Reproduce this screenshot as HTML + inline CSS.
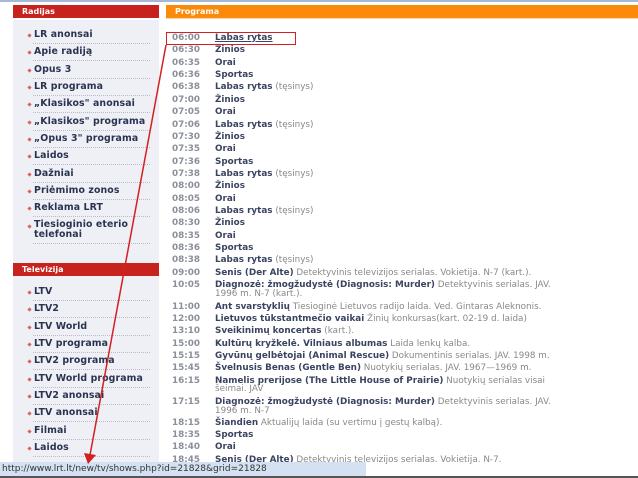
<!DOCTYPE html>
<html><head><meta charset="utf-8"><style>
body{margin:0;width:638px;height:478px;overflow:hidden;background:#fff;font-family:"DejaVu Sans","Liberation Sans",sans-serif;position:relative}
.a{position:absolute;white-space:nowrap}
#side{position:absolute;left:13px;top:20px;width:146px;height:442px;background:#eef0f6}
.hd{position:absolute;height:13px;color:#fff;font-weight:bold;font-size:8px;line-height:13px;padding-left:9px;box-sizing:border-box}
.li{position:absolute;left:33px;width:117px;height:16px;border-bottom:1px dotted #b8bcc8;font-weight:bold;font-size:9.4px;color:#2a3450;line-height:12px;letter-spacing:0.1px}
.li:before{content:"";position:absolute;left:-5px;top:7px;width:3px;height:3px;background:#e06060;transform:rotate(45deg)}
.li span{position:absolute;left:1px;top:2px}
.r{position:absolute;left:172px;font-size:8.8px;line-height:8.5px;color:#888;white-space:nowrap}
.r b{color:#3a4460;font-weight:bold}
.r i{font-style:normal;position:absolute;left:0;color:#8a8f99;font-weight:bold}
.r .t{position:absolute;left:43px}
</style></head><body>
<div class="a" style="left:0;top:0;width:638px;height:2px;background:#a5b8d6"></div>
<div id="side"></div>
<div class="hd" style="left:13px;top:5px;width:146px;background:#c8221e">Radijas</div>
<div class="hd" style="left:166px;top:5px;width:472px;background:#fb8a0a">Programa</div>
<div class="a" style="left:166px;top:18px;width:472px;height:1px;background:#ffd9a8"></div>
<div class="hd" style="left:13px;top:263px;width:146px;background:#c8221e">Televizija</div>

<div class="li" style="top:27px"><span>LR anonsai</span></div>
<div class="li" style="top:44px"><span>Apie radiją</span></div>
<div class="li" style="top:62px"><span>Opus 3</span></div>
<div class="li" style="top:79px"><span>LR programa</span></div>
<div class="li" style="top:96px"><span>„Klasikos" anonsai</span></div>
<div class="li" style="top:114px"><span>„Klasikos" programa</span></div>
<div class="li" style="top:131px"><span>„Opus 3" programa</span></div>
<div class="li" style="top:148px"><span>Laidos</span></div>
<div class="li" style="top:166px"><span>Dažniai</span></div>
<div class="li" style="top:183px"><span>Priėmimo zonos</span></div>
<div class="li" style="top:200px"><span>Reklama LRT</span></div>
<div class="li" style="top:218px;height:25px"><span style="line-height:9.5px">Tiesioginio eterio<br>telefonai</span></div>

<div class="li" style="top:284px"><span>LTV</span></div>
<div class="li" style="top:301px"><span>LTV2</span></div>
<div class="li" style="top:319px"><span>LTV World</span></div>
<div class="li" style="top:336px"><span>LTV programa</span></div>
<div class="li" style="top:353px"><span>LTV2 programa</span></div>
<div class="li" style="top:371px"><span>LTV World programa</span></div>
<div class="li" style="top:388px"><span>LTV2 anonsai</span></div>
<div class="li" style="top:405px"><span>LTV anonsai</span></div>
<div class="li" style="top:423px"><span>Filmai</span></div>
<div class="li" style="top:440px"><span>Laidos</span></div>

<div class="r" style="top:34px"><i>06:00</i><span class="t"><b style="text-decoration:underline">Labas rytas</b></span></div>
<div class="r" style="top:46.4px"><i>06:30</i><span class="t"><b>Žinios</b></span></div>
<div class="r" style="top:58.7px"><i>06:35</i><span class="t"><b>Orai</b></span></div>
<div class="r" style="top:71px"><i>06:36</i><span class="t"><b>Sportas</b></span></div>
<div class="r" style="top:83.4px"><i>06:38</i><span class="t"><b>Labas rytas</b> (tęsinys)</span></div>
<div class="r" style="top:95.8px"><i>07:00</i><span class="t"><b>Žinios</b></span></div>
<div class="r" style="top:108.1px"><i>07:05</i><span class="t"><b>Orai</b></span></div>
<div class="r" style="top:120.5px"><i>07:06</i><span class="t"><b>Labas rytas</b> (tęsinys)</span></div>
<div class="r" style="top:132.8px"><i>07:30</i><span class="t"><b>Žinios</b></span></div>
<div class="r" style="top:145.2px"><i>07:35</i><span class="t"><b>Orai</b></span></div>
<div class="r" style="top:157.5px"><i>07:36</i><span class="t"><b>Sportas</b></span></div>
<div class="r" style="top:169.9px"><i>07:38</i><span class="t"><b>Labas rytas</b> (tęsinys)</span></div>
<div class="r" style="top:182.2px"><i>08:00</i><span class="t"><b>Žinios</b></span></div>
<div class="r" style="top:194.6px"><i>08:05</i><span class="t"><b>Orai</b></span></div>
<div class="r" style="top:206.9px"><i>08:06</i><span class="t"><b>Labas rytas</b> (tęsinys)</span></div>
<div class="r" style="top:219.3px"><i>08:30</i><span class="t"><b>Žinios</b></span></div>
<div class="r" style="top:231.6px"><i>08:35</i><span class="t"><b>Orai</b></span></div>
<div class="r" style="top:244px"><i>08:36</i><span class="t"><b>Sportas</b></span></div>
<div class="r" style="top:256.3px"><i>08:38</i><span class="t"><b>Labas rytas</b> (tęsinys)</span></div>
<div class="r" style="top:268.7px"><i>09:00</i><span class="t"><b>Senis (Der Alte)</b> Detektyvinis televizijos serialas. Vokietija. N-7 (kart.).</span></div>
<div class="r" style="top:281px"><i>10:05</i><span class="t"><b>Diagnozė: žmogžudystė (Diagnosis: Murder)</b> Detektyvinis serialas. JAV.<br>1996 m. N-7 (kart.).</span></div>
<div class="r" style="top:302.7px"><i>11:00</i><span class="t"><b>Ant svarstyklių</b> Tiesioginė Lietuvos radijo laida. Ved. Gintaras Aleknonis.</span></div>
<div class="r" style="top:315px"><i>12:00</i><span class="t"><b>Lietuvos tūkstantmečio vaikai</b> Žinių konkursas(kart. 02-19 d. laida)</span></div>
<div class="r" style="top:327.3px"><i>13:10</i><span class="t"><b>Sveikinimų koncertas</b> (kart.).</span></div>
<div class="r" style="top:339.7px"><i>15:00</i><span class="t"><b>Kultūrų kryžkelė. Vilniaus albumas</b> Laida lenkų kalba.</span></div>
<div class="r" style="top:352px"><i>15:15</i><span class="t"><b>Gyvūnų gelbėtojai (Animal Rescue)</b> Dokumentinis serialas. JAV. 1998 m.</span></div>
<div class="r" style="top:364.3px"><i>15:45</i><span class="t"><b>Švelnusis Benas (Gentle Ben)</b> Nuotykių serialas. JAV. 1967—1969 m.</span></div>
<div class="r" style="top:376.5px"><i>16:15</i><span class="t"><b>Namelis prerijose (The Little House of Prairie)</b> Nuotykių serialas visai<br>šeimai. JAV</span></div>
<div class="r" style="top:398px"><i>17:15</i><span class="t"><b>Diagnozė: žmogžudystė (Diagnosis: Murder)</b> Detektyvinis serialas. JAV.<br>1996 m. N-7</span></div>
<div class="r" style="top:418.7px"><i>18:15</i><span class="t"><b>Šiandien</b> Aktualijų laida (su vertimu į gestų kalbą).</span></div>
<div class="r" style="top:431px"><i>18:35</i><span class="t"><b>Sportas</b></span></div>
<div class="r" style="top:443px"><i>18:40</i><span class="t"><b>Orai</b></span></div>
<div class="r" style="top:456px"><i>18:45</i><span class="t"><b>Senis (Der Alte)</b> Detektyvinis televizijos serialas. Vokietija. N-7.<br>Rūta Sinkevičienė.</span></div>

<div class="a" style="left:166px;top:32px;width:128px;height:11px;border:1.5px solid #d42020"></div>
<div class="a" style="left:0;top:462px;width:366px;height:14px;background:#d3e1f3;font-family:'DejaVu Sans',sans-serif;font-size:9px;line-height:14px;color:#333;padding-left:2px;box-sizing:border-box">http://www.lrt.lt/new/tv/shows.php?id=21828&amp;grid=21828</div>
<div class="a" style="left:0;top:476px;width:638px;height:2px;background:#555"></div>
<svg class="a" style="left:0;top:0" width="638" height="478"><line x1="166" y1="45" x2="90" y2="455" stroke="#d42020" stroke-width="1.5"/><polygon points="84,453 96,455 88,464" fill="#d42020"/></svg>
</body></html>
